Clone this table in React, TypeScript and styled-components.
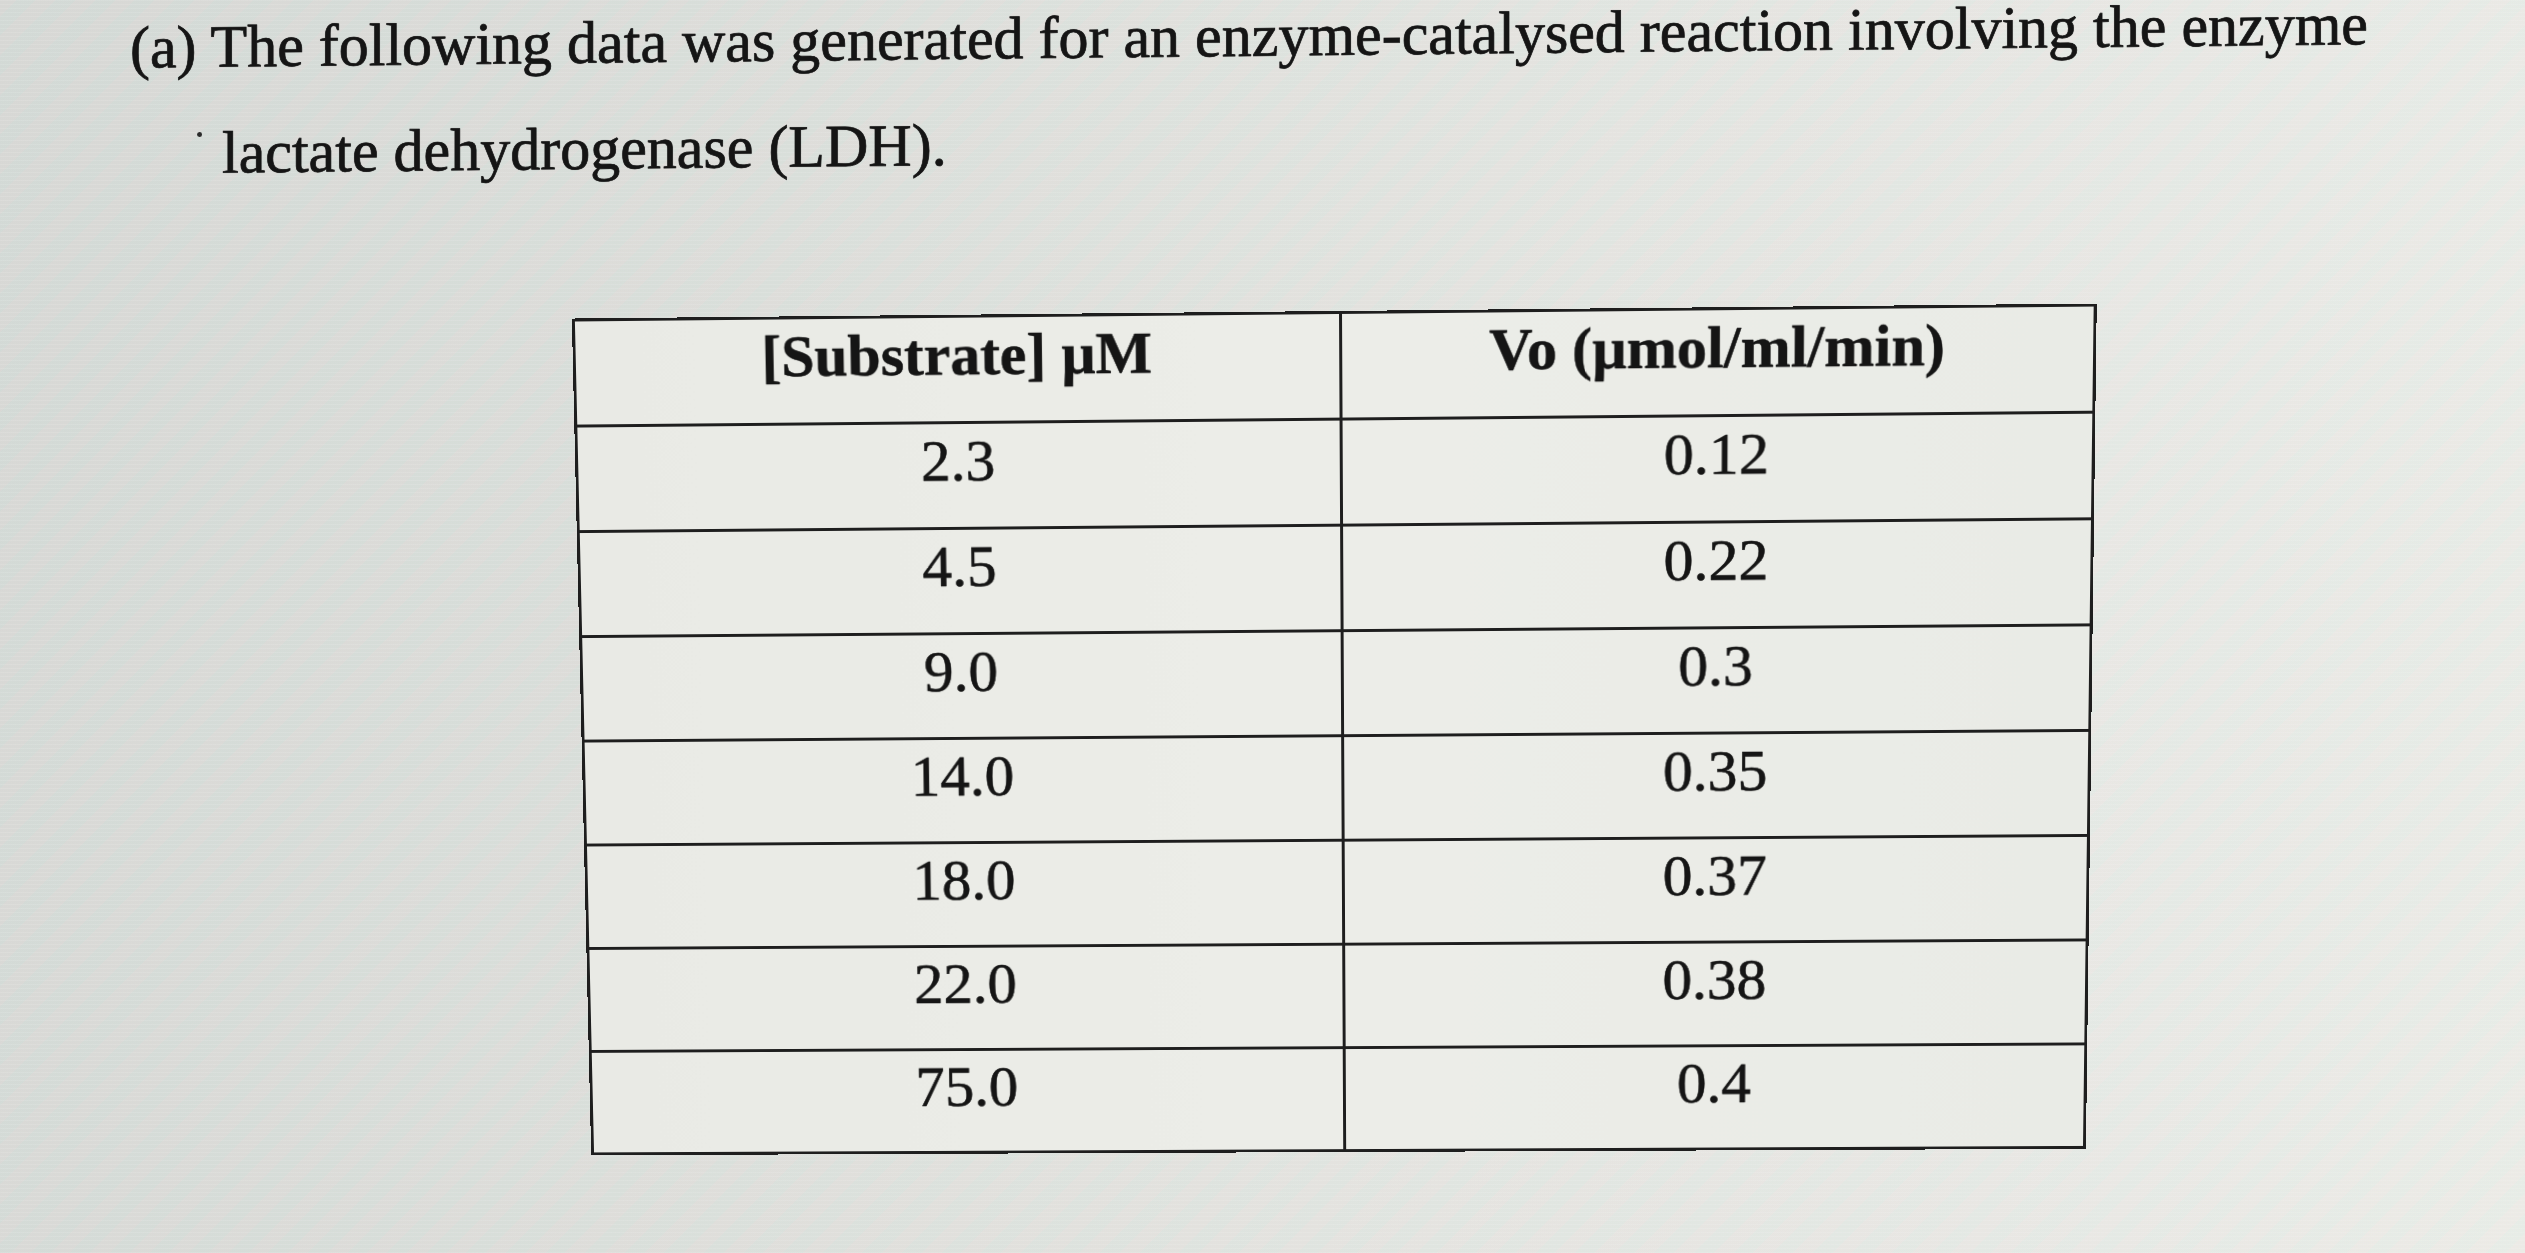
import React from "react";
import styled, { createGlobalStyle } from "styled-components";

const GlobalStyle = createGlobalStyle`
  html, body {
    margin: 0;
    padding: 0;
    overflow: hidden;
  }
  body {
    font-family: "Liberation Serif", "Times New Roman", serif;
    color: #151515;
  }
`;

const Page = styled.main`
  width: 2525px;
  height: 1253px;
  overflow: hidden;
  background-color: #dfe2de;
  background-image:
    repeating-linear-gradient(0deg, rgba(255, 255, 255, 0.10) 0 1px, transparent 1px 4px),
    repeating-linear-gradient(
      -45deg,
      rgba(236, 205, 205, 0.10) 0 14px,
      rgba(190, 220, 210, 0.10) 14px 28px
    ),
    linear-gradient(100deg, #d5d9d6 0%, #dcdfdb 30%, #e4e6e2 60%, #e9ebe7 85%, #eceee9 100%);
`;

const Sheet = styled.div`
  transform: skewY(-0.6deg);
  transform-origin: 0 0;
  display: flex;
  flex-direction: column;
`;

const Question = styled.div`
  margin-top: -4px;
  font-size: 60px;
  line-height: 106px;
  -webkit-text-stroke: 0.7px #1a1a1a;
  text-shadow: 0 0 1px rgba(0, 0, 0, 0.5);
`;

const Line = styled.div<{ $indent: number }>`
  display: flex;
  align-items: baseline;
  padding-left: ${(p) => p.$indent}px;
  white-space: nowrap;
`;

const Speck = styled.span`
  display: inline-block;
  width: 5px;
  height: 5px;
  border-radius: 50%;
  background: #2a2a2a;
  margin-right: 20px;
  align-self: flex-start;
  margin-top: 32px;
`;

const TableWrap = styled.div`
  margin-top: 117px;
  padding-left: 568px;
`;

const DataTable = styled.table`
  border-collapse: collapse;
  width: 1522px;
  table-layout: fixed;
  background: linear-gradient(90deg, #e9eae5 0%, #ecede8 50%, #e9ebe6 100%);
  border: 3px solid #1b1b1b;
  transform: perspective(2000px) rotateX(-2.7deg) rotateY(-0.75deg) skewX(0.3deg);
  transform-origin: 50% 0;
`;

const Cell = styled.td<{ $head?: boolean }>`
  height: 107px;
  box-sizing: border-box;
  border: 3px solid #1e1e1e;
  padding: 3px 0 0 0;
  vertical-align: top;
  text-align: center;
  font-size: 60px;
  line-height: 69px;
  font-weight: ${(p) => (p.$head ? 700 : 400)};
  -webkit-text-stroke: ${(p) => (p.$head ? "0.4px" : "0.5px")} #1a1a1a;
  text-shadow: 0 0 1px rgba(0, 0, 0, 0.45);
`;

const rows: [string, string][] = [
  ["2.3", "0.12"],
  ["4.5", "0.22"],
  ["9.0", "0.3"],
  ["14.0", "0.35"],
  ["18.0", "0.37"],
  ["22.0", "0.38"],
  ["75.0", "0.4"],
];

export default function App() {
  return (
    <>
      <GlobalStyle />
      <Page>
        <Sheet>
          <Question>
            <Line $indent={130}>
              (a) The following data was generated for an enzyme-catalysed reaction involving the enzyme
            </Line>
            <Line $indent={197}>
              <Speck />
              lactate dehydrogenase (LDH).
            </Line>
          </Question>
          <TableWrap>
            <DataTable>
              <colgroup>
                <col style={{ width: 771 }} />
                <col style={{ width: 751 }} />
              </colgroup>
              <tbody>
                <tr>
                  <Cell $head>[Substrate] µM</Cell>
                  <Cell $head>Vo (µmol/ml/min)</Cell>
                </tr>
                {rows.map(([s, v]) => (
                  <tr key={s}>
                    <Cell>{s}</Cell>
                    <Cell>{v}</Cell>
                  </tr>
                ))}
              </tbody>
            </DataTable>
          </TableWrap>
        </Sheet>
      </Page>
    </>
  );
}
